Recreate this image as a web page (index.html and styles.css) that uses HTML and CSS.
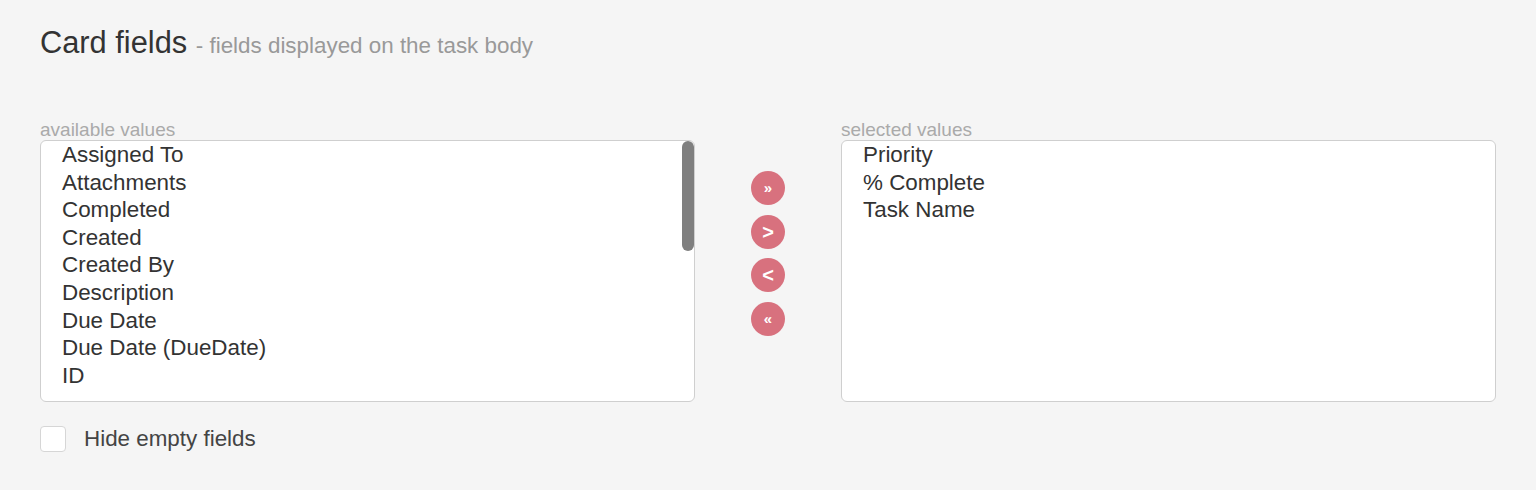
FILE: index.html
```html
<!DOCTYPE html>
<html lang="en">
<head>
<meta charset="utf-8">
<title>Card fields</title>
<link rel="stylesheet" href="styles.css">
</head>
<body>
<div class="page">
  <h1 class="title">Card fields <span class="subtitle">- fields displayed on the task body</span></h1>
  <div class="picker">
    <div class="column">
      <div class="label">available values</div>
      <div class="list">
        <div class="scroller">
          <div class="item">Assigned To</div>
          <div class="item">Attachments</div>
          <div class="item">Completed</div>
          <div class="item">Created</div>
          <div class="item">Created By</div>
          <div class="item">Description</div>
          <div class="item">Due Date</div>
          <div class="item">Due Date (DueDate)</div>
          <div class="item">ID</div>
          <div class="item">Modified</div>
          <div class="item">Modified By</div>
          <div class="item">Predecessors</div>
          <div class="item">Progress</div>
          <div class="item">Related Items</div>
          <div class="item">Start Date</div>
          <div class="item">Start Date (StartDate)</div>
          <div class="item">Status</div>
          <div class="item">Task Group</div>
          <div class="item">Task Status</div>
          <div class="item">Title</div>
        </div>
        <div class="thumb"></div>
      </div>
    </div>
    <div class="actions">
      <button class="move small" type="button">&raquo;</button>
      <button class="move" type="button">&gt;</button>
      <button class="move" type="button">&lt;</button>
      <button class="move small" type="button">&laquo;</button>
    </div>
    <div class="column">
      <div class="label">selected values</div>
      <div class="list">
        <div class="scroller">
          <div class="item">Priority</div>
          <div class="item">% Complete</div>
          <div class="item">Task Name</div>
        </div>
      </div>
    </div>
  </div>
  <label class="check">
    <span class="box"></span>
    <span class="check-text">Hide empty fields</span>
  </label>
</div>
</body>
</html>
```
FILE: styles.css
```css
html, body {
  margin: 0;
  padding: 0;
  background: #f5f5f5;
}
body {
  font-family: "Liberation Sans", Arial, Helvetica, sans-serif;
  color: #333;
}
.page {
  padding: 25px 40px 0 40px;
}
.title {
  margin: 0;
  font-size: 30.8px;
  line-height: 36px;
  font-weight: normal;
  color: #333;
}
.subtitle {
  font-size: 22.4px;
  line-height: 20px;
  color: #999;
}
.picker {
  display: flex;
  margin-top: 59px;
}
.column {
  width: 655px;
  display: flex;
  flex-direction: column;
}
.label {
  font-size: 19px;
  line-height: 20px;
  color: #aaa;
}
.list {
  position: relative;
  box-sizing: border-box;
  height: 262px;
  background: #fff;
  border: 1px solid #cfcfcf;
  border-radius: 6px;
  padding-bottom: 11px;
  overflow: hidden;
}
.scroller {
  height: 100%;
  overflow: hidden;
}
.thumb {
  position: absolute;
  top: 0;
  right: 0;
  width: 12px;
  height: 110px;
  background: #7f7f7f;
  border-radius: 6px;
}
.item {
  padding-left: 21px;
  font-size: 22.4px;
  line-height: 27.6px;
  color: #333;
  white-space: nowrap;
}
.actions {
  width: 146px;
  display: flex;
  flex-direction: column;
  align-items: center;
  gap: 9.5px;
  padding-top: 51px;
}
.move {
  width: 34px;
  height: 34px;
  border-radius: 50%;
  border: 0;
  padding: 0;
  background: #d8717e;
  color: #fff;
  font-family: "Liberation Sans", Arial, sans-serif;
  font-weight: bold;
  font-size: 20px;
  line-height: 34px;
  display: flex;
  align-items: center;
  justify-content: center;
}
.move.small {
  font-size: 15px;
}
.check {
  display: flex;
  align-items: center;
  gap: 18px;
  margin-top: 24px;
}
.box {
  box-sizing: border-box;
  width: 26px;
  height: 26px;
  background: #fff;
  border: 1px solid #d6d6d6;
  border-radius: 4px;
}
.check-text {
  font-size: 22.4px;
  line-height: 26px;
  color: #444;
}
```
